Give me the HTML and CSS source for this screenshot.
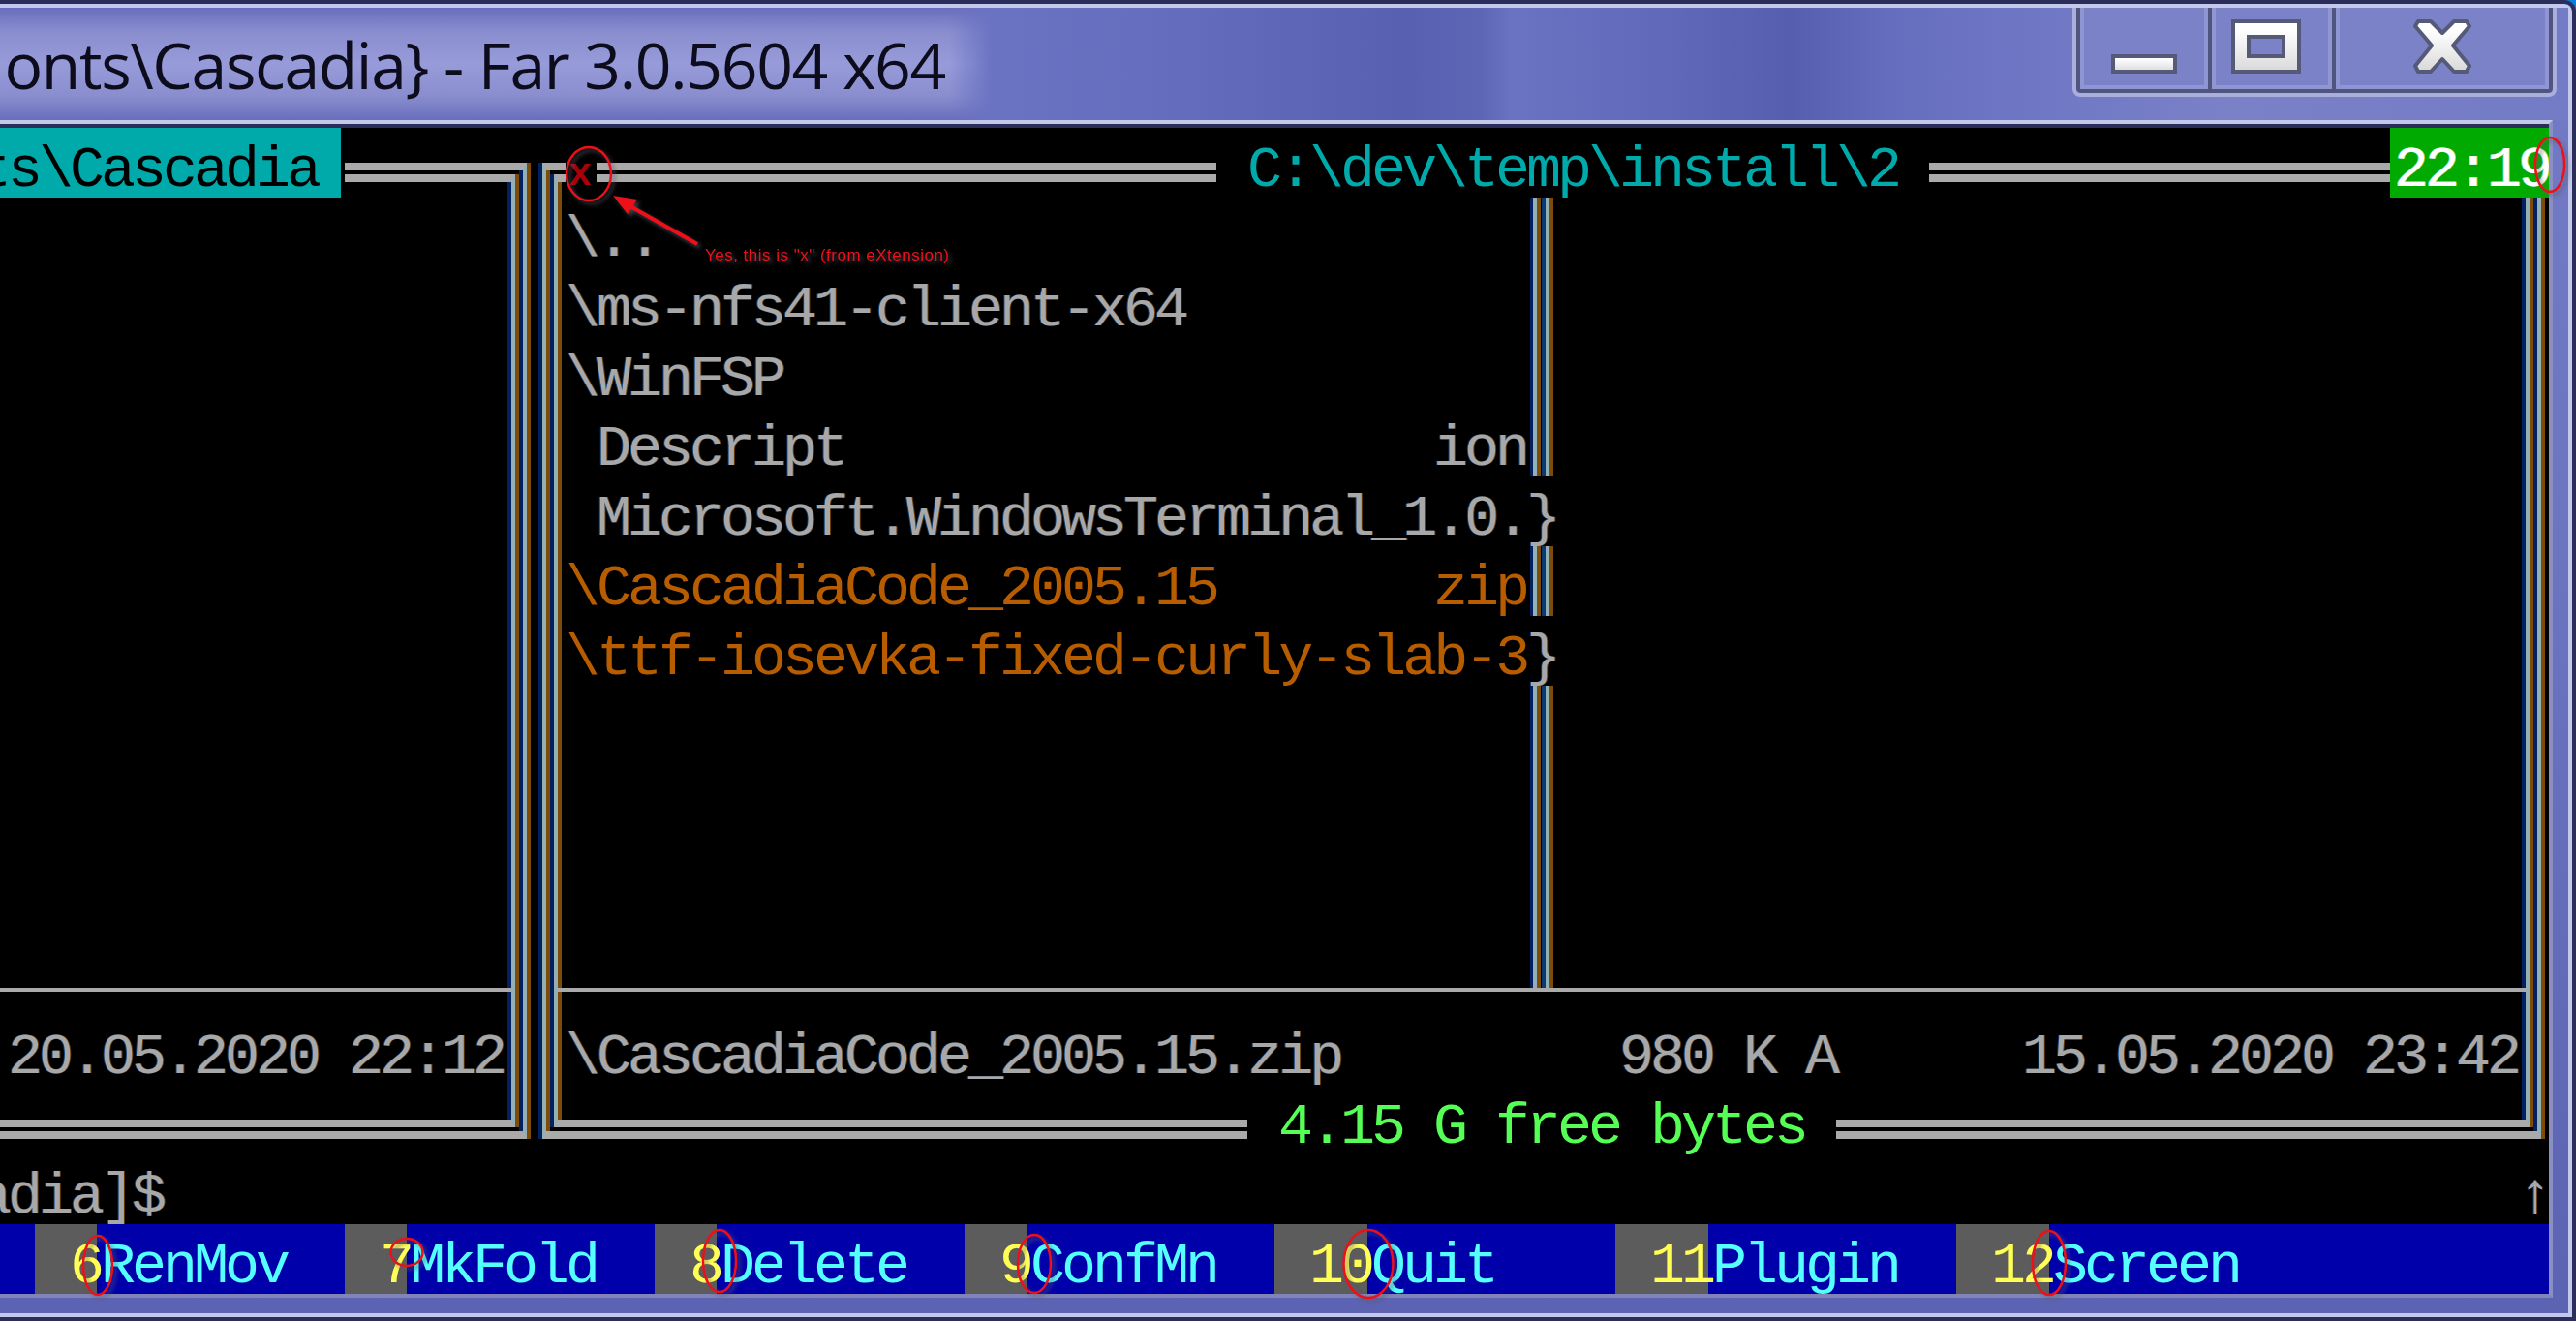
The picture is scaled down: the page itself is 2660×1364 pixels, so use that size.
FILE: index.html
```html
<!DOCTYPE html>
<html lang="en">
<head>
<meta charset="utf-8">
<title>Far 3.0.5604 x64</title>
<link rel="stylesheet" href="styles.css">
</head>
<body>
<div class="window">
  <div class="glass">
    <header class="titlebar">
      <div class="title"><span>onts\Cascadia} - Far 3.0.5604 x64</span></div>
      <div class="caption">
        <div class="caption-in">
          <div class="btn btn-min">
            <svg width="68" height="56" viewBox="0 0 68 56"><defs><linearGradient id="shine" x1="0" y1="0" x2="0" y2="1"><stop offset="0.15" stop-color="#ffffff"/><stop offset="0.6" stop-color="#ececec"/><stop offset="1" stop-color="#d8d8d8"/></linearGradient></defs><rect x="2" y="38" width="64" height="16" fill="url(#shine)" stroke="#555a78" stroke-width="4"/></svg>
          </div>
          <div class="btn btn-max">
            <svg width="72" height="56" viewBox="0 0 72 56"><path d="M2 2H70V54H2ZM18 18V38H54V18Z" fill="url(#shine)" fill-rule="evenodd" stroke="#555a78" stroke-width="4"/></svg>
          </div>
          <div class="btn btn-close">
            <svg width="60" height="56" viewBox="0 0 60 56"><path d="M5 2H18L30 14L42 2H55L58 7L41 27L58 48L55 54H42L30 41L18 54H5L2 48L19 27L2 7Z" fill="url(#shine)" stroke="#555a78" stroke-width="4" stroke-linejoin="round"/></svg>
          </div>
        </div>
      </div>
    </header>
    <div class="client-frame">
      <main class="client">
        <div class="panels">
          <section class="panel panel-left">
            <div class="head head-left term">ts\Cascadia</div>
            <div class="outer"><div class="inner">
              <div class="list"></div>
              <div class="rule"></div>
              <div class="status status-left term">20.05.2020 22:12</div>
            </div></div>
          </section>
          <section class="panel panel-right">
            <div class="sort term">x</div>
            <div class="head head-right term">C:\dev\temp\install\2</div>
            <div class="outer"><div class="inner">
              <div class="list">
                <div class="row term"><span class="name">\..</span><span class="sep"></span></div>
                <div class="row term"><span class="name">\ms-nfs41-client-x64</span><span class="sep"></span></div>
                <div class="row term"><span class="name">\WinFSP</span><span class="sep"></span></div>
                <div class="row term"><span class="name"> Descript</span><span class="ext">ion</span><span class="sep"></span></div>
                <div class="row term"><span class="name"> Microsoft.WindowsTerminal_1.0.</span><span class="more">}</span></div>
                <div class="row term arc"><span class="name">\CascadiaCode_2005.15</span><span class="ext">zip</span><span class="sep"></span></div>
                <div class="row term arc"><span class="name">\ttf-iosevka-fixed-curly-slab-3</span><span class="more">}</span></div>
                <div class="row row-fill"><span class="name"></span><span class="sep"></span></div>
              </div>
              <div class="rule"></div>
              <div class="status status-right term"><span class="st-name">\CascadiaCode_2005.15.zip</span><span class="st-size">980 K A</span><span>15.05.2020 23:42</span></div>
            </div></div>
            <div class="free term">4.15 G free bytes</div>
          </section>
          <div class="clock term">22:19</div>
        </div>
        <div class="prompt term"><span class="prompt-text">adia]$</span><span class="scroll">↑</span></div>
        <nav class="keys term">
          <div class="key"><span class="num">6</span><span class="label">RenMov</span></div>
          <div class="key"><span class="num">7</span><span class="label">MkFold</span></div>
          <div class="key"><span class="num">8</span><span class="label">Delete</span></div>
          <div class="key"><span class="num">9</span><span class="label">ConfMn</span></div>
          <div class="key"><span class="num num-wide">10</span><span class="label">Quit</span></div>
          <div class="key"><span class="num num-wide">11</span><span class="label">Plugin</span></div>
          <div class="key"><span class="num num-wide">12</span><span class="label">Screen</span></div>
        </nav>
      </main>
    </div>
  </div>
  <svg class="notes" width="2660" height="1364" viewBox="0 0 2660 1364">
    <g class="note-shapes">
      <ellipse cx="608" cy="179.5" rx="23" ry="27.5"/>
      <ellipse cx="2633" cy="170" rx="15" ry="28"/>
      <ellipse cx="101" cy="1306.5" rx="15" ry="30.5"/>
      <ellipse cx="420" cy="1293" rx="16.5" ry="14"/>
      <ellipse cx="743" cy="1302" rx="17" ry="32"/>
      <ellipse cx="1068" cy="1305" rx="17" ry="30"/>
      <ellipse cx="1413" cy="1305" rx="25.5" ry="35"/>
      <ellipse cx="2116" cy="1304" rx="17" ry="33"/>
      <line x1="720" y1="252" x2="642" y2="208"/>
      <path class="note-tip" d="M633 202L658 206L648 221Z"/>
      <text class="note-text" x="728" y="269" textLength="252">Yes, this is "x" (from eXtension)</text>
    </g>
  </svg>
</div>
</body>
</html>
```
FILE: styles.css
```css
* { box-sizing: border-box; }
html, body { margin: 0; padding: 0; background: #0a80e0; }
body { width: 2660px; height: 1364px; overflow: hidden; }

.window {
  position: relative;
  width: 2660px;
  height: 1364px;
  overflow: hidden;
  border: 4px solid #2b2e58;
  border-left: 0;
  border-top-right-radius: 12px;
}
.glass {
  display: flex;
  flex-direction: column;
  height: 100%;
  border: 4px solid #c4c8ea;
  border-left: 0;
  border-top-right-radius: 8px;
  background: linear-gradient(180deg, #747bc6 0%, #6d74c0 40%, #5c63b2 100%);
}

/* title bar */
.titlebar {
  display: flex;
  justify-content: space-between;
  height: 116px;
  flex: none;
  background:
    linear-gradient(90deg,
      transparent 980px,
      #6a72c2 1025px,
      #656dbe 1200px,
      #5860b2 1450px,
      #5d65b5 1530px,
      #6a72c2 1560px,
      #626abb 1700px,
      #565eb0 1850px,
      #656dbe 1950px,
      #6f77c5 2100px,
      #7a81c7 2300px,
      #747bc6 2660px),
    linear-gradient(180deg, #696ebc 0%, #8a8ecf 22%, #989bd9 50%, #8a8ecf 78%, #696ebc 100%);
}
.title {
  display: flex;
  justify-content: flex-end;
  width: 976px;
  overflow: hidden;
  font-family: "Open Sans", "Liberation Sans", sans-serif;
  font-size: 66px;
  line-height: 116px;
  letter-spacing: -1.3px;
  white-space: nowrap;
  color: #0c0c1c;
}
.caption {
  flex: none;
  width: 500px;
  height: 92px;
  margin-right: 12px;
  border: 4px solid #a9aedd;
  border-top: 0;
  border-radius: 0 0 8px 8px;
}
.caption-in {
  display: flex;
  gap: 4px;
  height: 100%;
  border: 4px solid #50557e;
  border-top: 0;
  border-radius: 0 0 5px 5px;
  background: #50557e;
}
.btn {
  display: flex;
  align-items: center;
  justify-content: center;
  height: 84px;
  background: #7b82c8;
  border: 4px solid #9095d4;
  border-top: 0;
}
.btn-min { width: 132px; }
.btn-max { width: 124px; padding-right: 12px; }
.btn-close { width: 220px; }

/* client */
.client-frame {
  flex: none;
  width: 2636px;
  height: 1216px;
  border-top: 4px solid #c4c8ea;
  border-right: 4px solid #8a8fc4;
  border-bottom: 4px solid #8085b5;
}
.client {
  display: flex;
  flex-direction: column;
  height: 100%;
  background: #000;
  border-top: 4px solid #2b2e58;
  overflow: hidden;
}
.term {
  font-family: "Liberation Mono", monospace;
  font-size: 60px;
  letter-spacing: -4px;
  line-height: 56px;
  white-space: pre;
  color: #a8a8a8;
  text-shadow: -1px 0 0 #0a3f78, 1px 0 0 #6a3a00;
}

.panels {
  position: relative;
  display: flex;
  gap: 16px;
  flex: none;
  height: 1060px;
  padding-right: 8px;
}
.panel {
  position: relative;
  padding: 36px 0 16px;
}
.panel-left { flex: none; width: 576px; margin-left: -32px; }
.panel-right { flex: 1; min-width: 0; }

.outer, .inner {
  border: 8px solid #aaa;
  border-left-width: 4px;
  border-right-width: 4px;
  border-left-color: #93b0b6;
  border-right-color: #93b0b6;
  box-shadow:
    -4px 0 0 #02215e,
    4px 0 0 #7c4c08,
    inset 4px 0 0 #7c4c08,
    inset -4px 0 0 #02215e;
}
.outer {
  height: 100%;
  padding: 4px 8px;
}
.inner {
  display: flex;
  flex-direction: column;
  height: 100%;
  background: #000;
}
.list {
  display: flex;
  flex-direction: column;
  flex: 1;
  min-height: 0;
  padding: 16px 0 0 8px;
}
.row {
  display: flex;
  flex: none;
  width: 1024px;
  height: 72px;
}
.row-fill { flex: 1; height: auto; }
.name { flex: 1; min-width: 0; padding-top: 16px; }
.ext { flex: none; padding-top: 16px; }
.sep, .more { flex: none; width: 32px; }
.more { padding-top: 16px; }
.sep {
  background: linear-gradient(90deg,
    transparent 4px,
    #02215e 4px 7px,
    #93b0b6 7px 11px,
    #7c4c08 11px 15px,
    transparent 15px 16px,
    #0a3a70 16px 20px,
    #93b0b6 20px 24px,
    #7c4c08 24px 28px,
    transparent 28px);
}
.arc { color: #b85c00; text-shadow: none; }
.arc .more { color: #a8a8a8; text-shadow: -1px 0 0 #0a3f78, 1px 0 0 #6a3a00; }
.rule { flex: none; height: 4px; background: #aaa; }
.status {
  display: flex;
  flex: none;
  height: 132px;
  padding: 40px 0 0 8px;
}
.status-left { padding: 40px 8px 0 0; justify-content: flex-end; }
.st-name { width: 1088px; }
.st-size { width: 416px; }

/* text that sits on the frame lines */
.head, .sort, .free, .clock {
  position: absolute;
  height: 72px;
  padding-top: 16px;
}
.head-left {
  top: 0;
  left: 8px;
  width: 380px;
  background: #00aaaa;
  border-right: 4px solid #000;
  color: #000;
  text-shadow: none;
}
.head-right {
  top: 0;
  left: 696px;
  width: 736px;
  padding-left: 32px;
  background: #000;
  color: #00aaaa;
  text-shadow: none;
}
.sort {
  top: 0;
  left: 24px;
  width: 32px;
  padding-top: 29px;
  padding-left: 3px;
  background: #000;
  color: #a8000a;
  font-size: 40px;
  font-weight: bold;
  line-height: 40px;
  text-shadow: none;
}
.free {
  bottom: 0;
  left: 728px;
  width: 608px;
  padding-left: 32px;
  background: #000;
  color: #55ff55;
  text-shadow: none;
}
.clock {
  top: 0;
  right: 0;
  width: 164px;
  padding-left: 4px;
  background: #00aa00;
  color: #fff;
  text-shadow: -1px 0 0 #33dddd, 1px 0 0 #cccc11;
}

/* prompt and key bar */
.prompt {
  display: flex;
  justify-content: space-between;
  flex: none;
  height: 72px;
  padding-top: 16px;
  margin-left: -24px;
}
.scroll { width: 32px; font-weight: bold; }
.keys {
  display: flex;
  flex: none;
  height: 72px;
  padding-left: 36px;
  background: #0000aa;
  text-shadow: none;
}
.key { display: flex; flex: none; }
.num {
  flex: none;
  width: 68px;
  padding-top: 16px;
  padding-left: 36px;
  background: linear-gradient(#5c5c5c, #5c5c5c) no-repeat left top / calc(100% - 4px) 100%;
  color: #ffff55;
}
.num-wide { width: 100px; }
.label {
  flex: none;
  width: 252px;
  padding-top: 16px;
  color: #55ffff;
}

/* red screenshot annotations */
.notes {
  position: absolute;
  top: -4px;
  left: 0;
  pointer-events: none;
}
.note-shapes {
  fill: none;
  stroke: #ee1018;
  stroke-width: 2.5;
  filter: drop-shadow(3px 3px 2px rgba(90, 90, 110, 0.7));
}
.note-shapes line { stroke-width: 4; }
.note-tip { fill: #ee1018; stroke: none; }
.note-text {
  fill: #ee1018;
  stroke: none;
  font-family: "Liberation Sans", sans-serif;
  font-size: 17px;
}
```
